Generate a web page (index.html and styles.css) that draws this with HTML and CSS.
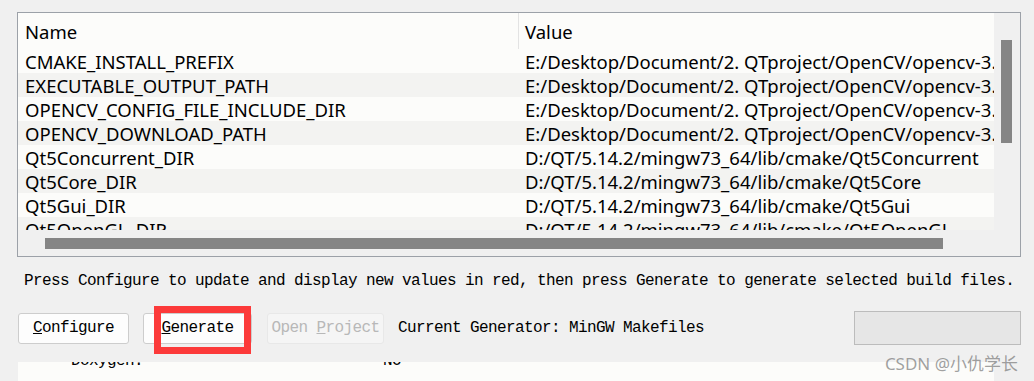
FILE: index.html
```html
<!DOCTYPE html>
<html lang="en">
<head>
  <meta charset="UTF-8" />
  <meta name="viewport" content="width=device-width, initial-scale=1.0"/>
  <title>CMake GUI</title>
  <link rel="stylesheet" href="styles.css">
</head>
<body>
  <div class="window">
    <!-- Cache entries -->
    <div class="cache-view">
      <div class="cache-main">
        <div class="cache-table">
          <div class="row head">
            <span class="name">Name</span>
            <span class="value">Value</span>
          </div>
          <div class="row"><span class="name">CMAKE_INSTALL_PREFIX</span><span class="value">E:/Desktop/Document/2. QTproject/OpenCV/opencv-3.4.1/install</span></div>
          <div class="row"><span class="name">EXECUTABLE_OUTPUT_PATH</span><span class="value">E:/Desktop/Document/2. QTproject/OpenCV/opencv-3.4.1/bin</span></div>
          <div class="row"><span class="name">OPENCV_CONFIG_FILE_INCLUDE_DIR</span><span class="value">E:/Desktop/Document/2. QTproject/OpenCV/opencv-3.4.1/build</span></div>
          <div class="row"><span class="name">OPENCV_DOWNLOAD_PATH</span><span class="value">E:/Desktop/Document/2. QTproject/OpenCV/opencv-3.4.1/.cache</span></div>
          <div class="row"><span class="name">Qt5Concurrent_DIR</span><span class="value">D:/QT/5.14.2/mingw73_64/lib/cmake/Qt5Concurrent</span></div>
          <div class="row"><span class="name">Qt5Core_DIR</span><span class="value">D:/QT/5.14.2/mingw73_64/lib/cmake/Qt5Core</span></div>
          <div class="row"><span class="name">Qt5Gui_DIR</span><span class="value">D:/QT/5.14.2/mingw73_64/lib/cmake/Qt5Gui</span></div>
          <div class="row"><span class="name">Qt5OpenGL_DIR</span><span class="value">D:/QT/5.14.2/mingw73_64/lib/cmake/Qt5OpenGL</span></div>
        </div>
        <div class="vscroll"><div class="thumb"></div></div>
      </div>
      <div class="hscroll"><div class="thumb"></div></div>
    </div>

    <p class="status">Press Configure to update and display new values in red, then press Generate to generate selected build files.</p>

    <!-- Buttons -->
    <div class="actions">
      <button class="btn btn-configure"><u>C</u>onfigure</button>
      <div class="marked">
        <button class="btn btn-generate"><u>G</u>enerate</button>
        <div class="highlight"></div>
      </div>
      <button class="btn btn-open" disabled>Open <u>P</u>roject</button>
      <span class="generator">Current Generator: MinGW Makefiles</span>
      <div class="progress"></div>
    </div>

    <!-- Output log -->
    <div class="output">
      <div class="log">
        <div class="log-line"><span class="key">Doxygen:</span><span>NO</span></div>
      </div>
      <div class="log-scroll"></div>
    </div>

    <div class="watermark">CSDN @小仇学长</div>
  </div>
</body>
</html>
```

FILE: styles.css
```css
body {
  margin: 0;
  padding: 0;
  background-color: #f0f0f0;
  font-family: 'Noto Sans', sans-serif;
  color: #000;
}

.window {
  position: relative;
  height: 381px;
  overflow: hidden;
  padding-top: 12px;
  box-sizing: border-box;
}

.cache-view {
  margin: 0 13px 0 17px;
  border: 1px solid #9ca1a8;
  background-color: #f0f0f0;
}

.cache-main {
  display: flex;
  height: 217px;
}

.cache-table {
  width: 976px;
  background-color: #fcfcfa;
  overflow: hidden;
}

.row {
  display: flex;
  height: 24px;
  align-items: center;
  font-size: 18.5px;
  white-space: nowrap;
}

.row:nth-child(odd) {
  background-color: #f3f3f1;
}

.row.head {
  height: 36px;
  background-color: #fcfcfa;
}

.row .name {
  width: 500px;
  padding-left: 7px;
  box-sizing: border-box;
  overflow: hidden;
  flex-shrink: 0;
}

.row .value {
  padding-left: 7px;
  overflow: hidden;
}

.row.head .value {
  align-self: stretch;
  display: flex;
  align-items: center;
  border-left: 1px solid #e3e3e3;
  padding-left: 6px;
}

.vscroll {
  width: 26px;
  padding: 27px 0 0 7px;
  box-sizing: border-box;
}

.vscroll .thumb {
  width: 11px;
  height: 103px;
  background-color: #858585;
}

.hscroll {
  height: 26px;
  padding: 8px 0 0 27px;
  box-sizing: border-box;
}

.hscroll .thumb {
  width: 898px;
  height: 11px;
  background-color: #858585;
}

.status {
  margin: 15px 0 0 24px;
  font-family: 'Liberation Mono', monospace;
  font-size: 16px;
  letter-spacing: -0.6px;
  line-height: 18px;
  white-space: nowrap;
}

.actions {
  display: flex;
  align-items: center;
  margin: 21px 13px 0 18px;
  height: 34px;
}

.btn {
  height: 31px;
  border: 1px solid #cdcdcd;
  border-radius: 3px;
  background-color: #fdfdfd;
  font-family: 'Liberation Mono', monospace;
  font-size: 16px;
  letter-spacing: -0.6px;
  color: #000;
  padding: 0;
  text-align: center;
}

.btn-configure {
  width: 111px;
}

.marked {
  position: relative;
  margin-left: 14px;
}

.btn-generate {
  width: 109px;
  display: block;
}

.highlight {
  position: absolute;
  left: 11px;
  top: -7px;
  width: 97px;
  height: 48px;
  border: 7px solid #fc3a3a;
  box-sizing: border-box;
}

.btn-open {
  width: 117px;
  margin-left: 15px;
  background-color: #f5f5f5;
  border-color: #e8e8e8;
  color: #b8b8b8;
}

.generator {
  margin-left: 14px;
  font-family: 'Liberation Mono', monospace;
  font-size: 16px;
  letter-spacing: -0.6px;
  white-space: nowrap;
}

.progress {
  margin-left: auto;
  width: 167px;
  height: 34px;
  box-sizing: border-box;
  border: 1px solid #bcbcbc;
  background-color: #e6e6e6;
}

.output {
  display: flex;
  margin: 17px 14px 0 18px;
  height: 40px;
}

.log {
  width: 976px;
  background-color: #fcfcfa;
  overflow: hidden;
}

.log-line {
  display: flex;
  margin-top: -10px;
  padding-left: 53px;
  font-family: 'Liberation Mono', monospace;
  font-size: 16px;
  letter-spacing: -0.6px;
  line-height: 18px;
  white-space: nowrap;
}

.log-line .key {
  width: 312px;
}

.log-scroll {
  flex: 1;
  background-color: #f0f0f0;
}

.watermark {
  position: absolute;
  right: 16px;
  bottom: 6px;
  font-family: 'Noto Sans', 'Noto Sans CJK SC', sans-serif;
  font-size: 17px;
  color: rgba(120, 120, 120, 0.7);
  white-space: nowrap;
}
```
